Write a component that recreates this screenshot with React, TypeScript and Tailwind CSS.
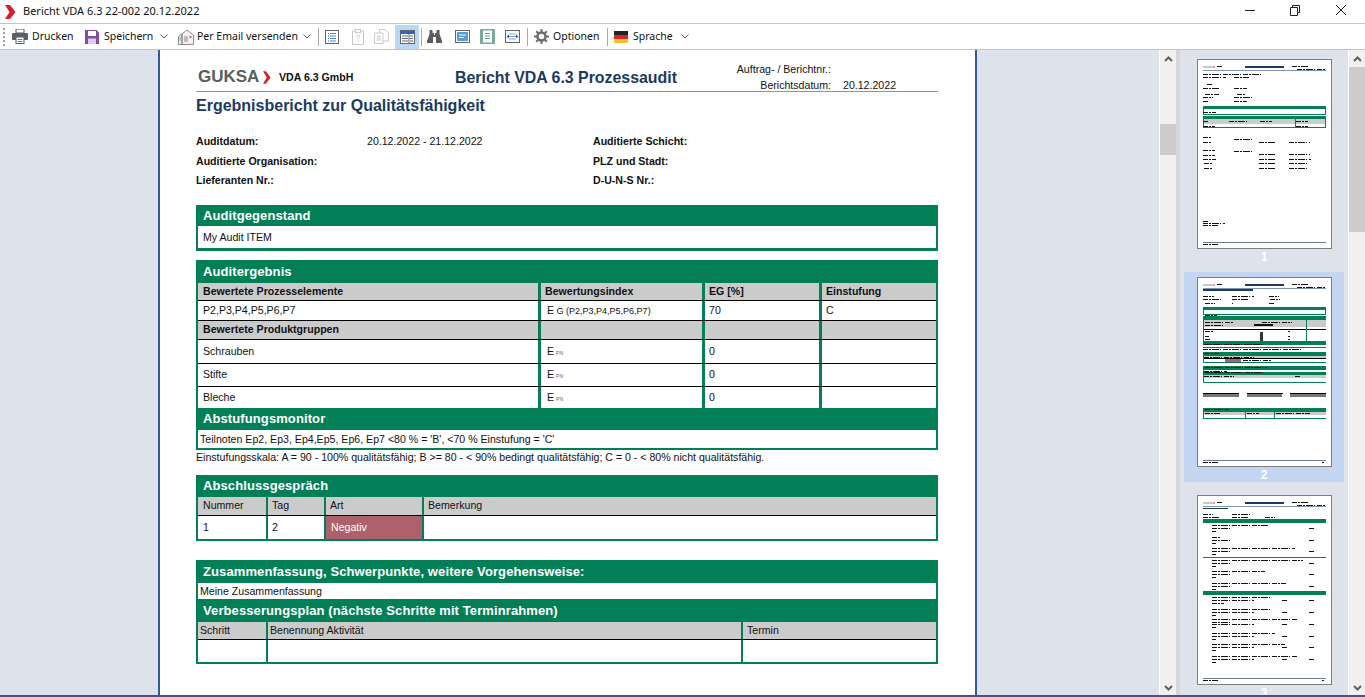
import type { ReactNode } from "react"

const ui = { fontFamily: '"Noto Sans", "Open Sans", sans-serif' }
const doc = { fontFamily: '"Liberation Sans", Arial, sans-serif' }

type Block = [number, number, number, number, string]
type Dash = [number, number, number, string?]

const GREEN = "#037f58"
const GREY = "#cbcbcb"

function Separator() {
  return <div className="h-[18px] w-px bg-[#a9a9a9]" />
}

function Chevron({ className = "" }: { className?: string }) {
  return (
    <svg width="8" height="5" viewBox="0 0 8 5" fill="none" stroke="#555" className={className}>
      <path d="M.5.5 4 4 7.5.5" />
    </svg>
  )
}

function ListIcon() {
  return (
    <svg width="14" height="14" viewBox="0 0 14 14" fill="none">
      <rect x=".5" y=".5" width="13" height="13" fill="#fff" stroke="#5f6670" />
      <path d="M3 3.5h1M3 6h1M3 8.5h1M3 11h1" stroke="#2f6fc4" />
      <path d="M5 3.5h6M5 6h6M5 8.5h6M5 11h6" stroke="#4a86d0" />
    </svg>
  )
}

function Toolbar() {
  return (
    <div className="flex h-[27px] items-center border-y border-[#c4c4c4] bg-white text-[10.5px] text-[#111]" style={ui}>
      <div className="ml-[3px] h-[18px] w-[2px] border-l-2 border-dotted border-[#a0a0a0]" />
      <svg width="16" height="15" viewBox="0 0 16 15" className="ml-[7px]">
        <rect x="4" y="0" width="8" height="4" fill="#fff" stroke="#5b6068" />
        <rect x="0" y="4" width="16" height="7" rx="1" fill="#5b6068" />
        <rect x="4" y="8" width="8" height="6.5" fill="#fff" stroke="#5b6068" />
        <path d="M5.5 10.5h5M5.5 12.5h5" stroke="#7a7f88" />
      </svg>
      <span className="ml-1 w-[40px]">Drucken</span>
      <svg width="14" height="14" viewBox="0 0 14 14" className="ml-[13px]">
        <path d="M0 0h11.500l2.500 2.500V14H0z" fill="#7e4ea3" />
        <rect x="3" y="1" width="8" height="5" fill="#fff" />
        <rect x="3" y="8.500" width="8" height="5.500" fill="#d9cde6" />
      </svg>
      <span className="ml-[5px] w-[48px]">Speichern</span>
      <Chevron className="ml-2" />
      <svg width="16" height="16" viewBox="0 0 16 16" className="ml-[10px]" fill="none">
        <path d="M.5 7.500 4 5v10.500H.5zM4 5l5-4 6.500 5v9.500H4z" fill="#f2f2f2" stroke="#8a8a8a" />
        <path d="M1.500 9h1.500M1.500 11h1.500M6 8h4M6 10h4M6 12h4" stroke="#8a8a8a" />
        <rect x="11.500" y="7" width="2" height="2" fill="#d8685f" />
      </svg>
      <span className="ml-[3px] w-[98px] whitespace-nowrap">Per Email versenden</span>
      <Chevron className="ml-2" />
      <div className="ml-[7px]"><Separator /></div>
      <div className="ml-[6px]"><ListIcon /></div>
      <svg width="14" height="16" viewBox="0 0 14 16" className="ml-[12px]" fill="none" stroke="#c9c9c9">
        <rect x="1.500" y="2" width="11" height="13.500" />
        <rect x="4.500" y=".5" width="5" height="3" fill="#fff" />
        <path d="M5.500 7.500c.3-2 3-2 3 0 0 1-1.500 1-1.500 2.500M7 11.500v1.500" />
      </svg>
      <svg width="15" height="15" viewBox="0 0 15 15" className="ml-[9px]" fill="#fff" stroke="#c9c9c9">
        <path d="M5.500.5H11l3.500 3.500V12h-9z" />
        <path d="M.5 4H9v10.500H.5z" />
        <path d="M2.500 7h4.500M2.500 9h4.500M2.500 11h4.500" />
      </svg>
      <div className="ml-[6px] flex h-[24px] w-[24px] items-center justify-center bg-[#bcd7f5]">
        <svg width="15" height="14" viewBox="0 0 15 14">
          <rect x=".5" y=".5" width="14" height="13" fill="#fff" stroke="#5c6672" />
          <rect x="1" y="1" width="13" height="3" fill="#2f67b5" />
          <path d="M2 6h6M2 8.500h6M2 11h6M10 6h3M10 8.500h3M10 11h3" stroke="#5c6672" />
          <path d="M9 4v9" stroke="#5c6672" />
        </svg>
      </div>
      <div className="ml-[2px]"><Separator /></div>
      <svg width="15" height="13" viewBox="0 0 15 13" className="ml-[5px]" fill="#5c5c5c">
        <path d="M2.500 0h3v3H7v2H8V3h1.500V0h3v4l2.500 7v2H9V7H6v6H0v-2l2.500-7z" />
      </svg>
      <svg width="15" height="13" viewBox="0 0 15 13" className="ml-[13px]">
        <rect x=".5" y=".5" width="14" height="12" fill="#fff" stroke="#5f6670" />
        <rect x="2" y="2" width="11" height="9" fill="#5b9bd5" />
        <path d="M4 5h7M4 7.500h5" stroke="#fff" />
      </svg>
      <svg width="15" height="15" viewBox="0 0 15 15" className="ml-[10px]">
        <rect width="15" height="15" rx="1" fill="#7aa99a" />
        <rect x="3" y="1.500" width="9" height="12" fill="#fff" />
        <path d="M5 4.500h5M5 7h5M5 9.500h5" stroke="#6f8f9f" />
      </svg>
      <svg width="15" height="13" viewBox="0 0 15 13" className="ml-[10px]" fill="none">
        <rect x=".5" y=".5" width="14" height="12" fill="#fff" stroke="#5f6670" />
        <path d="M4 4h7M4 6.500h7M4 9h7" stroke="#7fa8d8" />
        <path d="M1.500 6.500 4 4.500v4zM13.500 6.500 11 4.500v4z" fill="#2f67b5" />
      </svg>
      <div className="ml-[7px]"><Separator /></div>
      <svg width="15" height="15" viewBox="0 0 15 15" className="ml-[6px]" fill="none">
        <circle cx="7.500" cy="7.500" r="4" stroke="#6c6c6c" strokeWidth="2.500" />
        <path d="M7.500 0v3M7.500 12v3M0 7.500h3M12 7.500h3M2.200 2.200l2 2M10.800 10.800l2 2M2.200 12.800l2-2M10.800 4.200l2-2" stroke="#6c6c6c" strokeWidth="2" />
      </svg>
      <span className="ml-1 w-[45px]">Optionen</span>
      <div className="ml-[9px]"><Separator /></div>
      <div className="ml-[6px] h-[12px] w-[14px] bg-[linear-gradient(#222_0,#222_33%,#d8242a_33%,#d8242a_66%,#f2c230_66%)]" />
      <span className="ml-[5px] w-[40px]">Sprache</span>
      <Chevron className="ml-2" />
    </div>
  )
}

function TitleBar() {
  return (
    <div className="flex h-[23px] items-center bg-white text-[11px] text-[#111]" style={ui}>
      <svg width="11" height="14" viewBox="0 0 11 14" className="ml-[5px]">
        <path d="M0 0h5l5.500 7L5 14H0l4.500-7z" fill="#d81e2c" />
      </svg>
      <span className="ml-[7px]">Bericht VDA 6.3 22-002 20.12.2022</span>
      <svg width="102" height="14" viewBox="0 0 102 14" fill="none" stroke="#222" className="ml-auto mr-[18px] -mt-[3px]">
        <path d="M0 7.500h10" />
        <path d="M45.500 4.500h7v8h-7zM47.500 4.500v-2h7v7h-2" />
        <path d="M91 2l10 10M101 2 91 12" />
      </svg>
    </div>
  )
}

function Section({ children, className = "" }: { children: ReactNode; className?: string }) {
  return <div className={`border-x-2 border-[#037f58] ${className}`}>{children}</div>
}

function Band({ children, h = "h-[22px]" }: { children: ReactNode; h?: string }) {
  return (
    <div className={`${h} -mx-[2px] flex items-center bg-[#037f58] pl-[7px] text-[13px] font-bold tracking-[0.1px] text-white`}>
      {children}
    </div>
  )
}

function Cells({ widths, cells, grey, bold, h, line, thin, bodyClass = "" }: {
  widths: string
  cells: ReactNode[]
  grey?: boolean
  bold?: boolean
  h: string
  line?: boolean
  thin?: boolean
  bodyClass?: string
}) {
  return (
    <div className={`grid ${h} ${widths} ${line ? "border-b border-black" : ""} ${grey ? "bg-[#cbcbcb]" : "bg-white"}`}>
      {cells.map((c, i) => (
        <div
          key={i}
          className={`flex items-center border-[#037f58] text-[10.6px] text-[#111] ${i > 0 ? (thin ? "border-l-2 pl-[4px]" : "border-l-[3px] pl-[4px]") : "pl-[5px]"} ${bold ? "font-bold" : ""} ${bodyClass}`}
        >
          {c}
        </div>
      ))}
    </div>
  )
}

function Eindex({ text }: { text: string }) {
  return (
    <span className="ml-[2px] flex items-baseline">
      <span className="text-[10.6px]">E</span>
      <span className="ml-[2px] text-[5px] text-[#666]">{text}</span>
    </span>
  )
}

const resultCols = "grid-cols-[340px_164px_117px_1fr]"
const closingCols = "grid-cols-[68px_58px_98px_1fr]"
const planCols = "grid-cols-[68px_475px_1fr]"

function Report() {
  return (
    <div className="ml-[158px] h-full w-[819px] shrink-0 overflow-hidden border-x-2 border-[#2f5a9e] bg-white pl-[36px]" style={doc}>
      <div className="w-[742px]">
        <div className="flex h-[42px] border-b border-[#7f96b5]">
          <div className="ml-[2px] mt-[17px] flex h-[20px] w-[73px] items-center text-[17px] font-bold text-[#56605e]">
            GUKSA
            <svg width="8" height="13" viewBox="0 0 8 13" className="ml-[4px]">
              <path d="M0 0h3l5 6.500L3 13H0l4-6.500z" fill="#d81e2c" />
            </svg>
          </div>
          <div className="ml-[8px] mt-[21px] w-[176px] text-[10.6px] font-bold leading-[13px] text-[#111]">VDA 6.3 GmbH</div>
          <div className="mt-[18px] w-[282px] text-[15.9px] font-bold leading-[20px] text-[#1b3a63]">Bericht VDA 6.3 Prozessaudit</div>
          <div className="mt-[12px] grid grid-cols-[94px_auto] grid-rows-[16px_16px] items-center gap-x-[12px] text-[10.6px] text-[#111]">
            <div className="-ml-[10px] whitespace-nowrap text-right">Auftrag- / Berichtnr.:</div>
            <div />
            <div className="text-right">Berichtsdatum:</div>
            <div>20.12.2022</div>
          </div>
        </div>
        <div className="mt-[4px] text-[16px] font-bold leading-[20px] text-[#1b3a63]">Ergebnisbericht zur Qualitätsfähigkeit</div>
        <div className="mt-[16px] grid grid-cols-[171px_226px_1fr] grid-rows-[20px_19px_20px] items-center text-[10.6px] text-[#111]">
          <b>Auditdatum:</b>
          <span>20.12.2022 - 21.12.2022</span>
          <b>Auditierte Schicht:</b>
          <b className="whitespace-nowrap">Auditierte Organisation:</b>
          <span />
          <b>PLZ und Stadt:</b>
          <b>Lieferanten Nr.:</b>
          <span />
          <b>D-U-N-S Nr.:</b>
        </div>

        <Section className="mt-[14px] border-b-[3px]">
          <Band h="h-[21px]">Auditgegenstand</Band>
          <div className="flex h-[22px] items-center pl-[5px] pt-[2px] text-[10.6px] text-[#111]">My Audit ITEM</div>
        </Section>

        <Section className="mt-[9px]">
          <Band h="h-[23px]">Auditergebnis</Band>
          <Cells h="h-[18px]" line grey bold widths={resultCols} cells={["Bewertete Prozesselemente", "Bewertungsindex", "EG [%]", "Einstufung"]} />
          <Cells h="h-[20px]" line widths={resultCols} cells={[
            "P2,P3,P4,P5,P6,P7",
            <span className="ml-[2px] text-[9px]"><span className="text-[10.6px]">E</span> G (P2,P3,P4,P5,P6,P7)</span>,
            "70",
            "C",
          ]} />
          <Cells h="h-[19px]" line grey bold widths={resultCols} cells={["Bewertete Produktgruppen", "", "", ""]} />
          <Cells h="h-[24px]" line widths={resultCols} cells={["Schrauben", <Eindex text="PN" />, "0", ""]} />
          <Cells h="h-[23px]" line widths={resultCols} cells={["Stifte", <Eindex text="PN" />, "0", ""]} />
          <Cells h="h-[21px]" widths={resultCols} cells={["Bleche", <Eindex text="PN" />, "0", ""]} />
          <Band>Abstufungsmonitor</Band>
          <div className="flex h-[18px] items-center pl-[2px] pt-[1px] text-[10.6px] text-[#111]">Teilnoten Ep2, Ep3, Ep4,Ep5, Ep6, Ep7 &lt;80 % = 'B', &lt;70 % Einstufung = 'C'</div>
          <div className="-mx-[2px] h-[2px] bg-[#037f58]" />
        </Section>
        <div className="flex h-[16px] items-center text-[10.6px] text-[#111]">
          Einstufungsskala: A = 90 - 100% qualitätsfähig; B &gt;= 80 - &lt; 90% bedingt qualitätsfähig; C = 0 - &lt; 80% nicht qualitätsfähig.
        </div>

        <Section className="mt-[9px] border-b-2">
          <Band>Abschlussgespräch</Band>
          <Cells h="h-[19px]" line grey thin widths={closingCols} cells={["Nummer", "Tag", "Art", "Bemerkung"]} />
          <div className={`grid h-[23px] ${closingCols}`}>
            <div className="flex items-center pl-[5px] text-[10.6px] text-[#111]">1</div>
            <div className="flex items-center border-l-2 border-[#037f58] pl-[4px] text-[10.6px] text-[#111]">2</div>
            <div className="flex items-center border-l-2 border-[#037f58] bg-[#ae616a] pl-[5px] text-[10.6px] text-white">Negativ</div>
            <div className="border-l-2 border-[#037f58]" />
          </div>
        </Section>

        <Section className="mt-[19px] border-b-2">
          <Band h="h-[23px]">Zusammenfassung, Schwerpunkte, weitere Vorgehensweise:</Band>
          <div className="flex h-[16px] items-center pl-[2px] pt-[1px] text-[10.6px] text-[#111]">Meine Zusammenfassung</div>
          <Band h="h-[23px]">Verbesserungsplan (nächste Schritte mit Terminrahmen)</Band>
          <Cells h="h-[18px]" line grey thin widths={planCols} bodyClass="!pl-[2px]" cells={["Schritt", "Benennung Aktivität", <span className="ml-[2px]">Termin</span>]} />
          <Cells h="h-[22px]" thin widths={planCols} cells={["", "", ""]} />
        </Section>
      </div>
    </div>
  )
}

function Scrollbar({ thumbTop, thumbH }: { thumbTop: string; thumbH: string }) {
  return (
    <div className="relative h-full w-[16px] shrink-0 bg-[#f0f0f0]">
      <svg width="9" height="6" viewBox="0 0 9 6" className="absolute left-[4px] top-[6px]" fill="none" stroke="#606060" strokeWidth="2">
        <path d="M1 5l3.500-3.500L8 5" />
      </svg>
      <div className={`absolute left-0 w-full bg-[#cdcdcd] ${thumbTop} ${thumbH}`} />
      <svg width="9" height="6" viewBox="0 0 9 6" className="absolute bottom-[4px] left-[4px]" fill="none" stroke="#606060" strokeWidth="2">
        <path d="M1 1l3.500 3.500L8 1" />
      </svg>
    </div>
  )
}

const header: Block[] = [
  [6, 7, 11, 2, "#c4c8c8"],
  [17, 7, 1, 2, "#e88a90"],
  [48, 7, 39, 2, "#1b3a63"],
  [6, 11, 123, 1, "#8496ad"],
]

const page1: Block[] = [
  ...header,
  [6, 47, 123, 3, GREEN], [6, 50, 1, 6, GREEN], [128, 50, 1, 6, GREEN], [6, 55, 123, 1, GREEN],
  [6, 57, 123, 3, GREEN], [7, 60, 121, 5, GREY], [6, 60, 1, 9, GREEN], [128, 60, 1, 9, GREEN], [98, 60, 1, 9, GREEN], [6, 68, 123, 1, GREEN],
  [6, 184, 123, 1, "#6f7b8a"],
]

const page1Text: Dash[] = [
  [20, 7, 6], [95, 7, 17], [100, 10, 29], [6, 15, 60], [6, 18, 23], [37, 18, 15],
  [10, 25, 6], [6, 29, 16], [37, 29, 13], [8, 35, 14], [40, 35, 8], [6, 38, 10], [37, 38, 18], [6, 42, 6], [37, 42, 13],
  [6, 53, 13], [6, 62, 6], [32, 62, 20], [63, 62, 12], [99, 62, 12], [6, 67, 12], [99, 67, 12],
  [6, 78, 8], [6, 83, 8], [37, 80, 20], [62, 83, 17], [92, 83, 21],
  [6, 91, 12], [37, 92, 20], [62, 96, 17], [92, 96, 21], [6, 97, 12], [6, 101, 13], [62, 101, 17], [92, 101, 22], [7, 105, 9], [62, 105, 17], [92, 105, 20], [7, 110, 9], [62, 110, 17], [92, 110, 20],
  [6, 163, 6], [6, 165, 22], [6, 167, 15], [6, 186, 15],
]

const page2: Block[] = [
  ...header,
  [6, 30, 123, 3, GREEN], [6, 33, 1, 5, GREEN], [128, 33, 1, 5, GREEN], [6, 37, 123, 1, GREEN],
  [6, 39, 123, 4, GREEN], [7, 43, 122, 7, GREY], [6, 52, 123, 1, "#000"], [6, 43, 1, 21, GREEN], [109, 43, 1, 21, GREEN],
  [6, 64, 123, 4, GREEN], [6, 70, 123, 1, GREEN],
  [6, 75, 123, 4, GREEN], [7, 79, 122, 2, GREY], [6, 81, 123, 1, "#000"], [28, 82, 16, 3, "#ae616a"], [6, 79, 1, 7, GREEN], [6, 85, 123, 1, GREEN],
  [6, 89, 123, 4, GREEN], [6, 95, 123, 4, GREEN], [7, 99, 122, 3, GREY], [6, 89, 1, 18, GREEN], [6, 106, 123, 1, GREEN],
  [6, 117, 36, 1, "#000"], [6, 118, 36, 3, "#777"], [50, 117, 36, 1, "#000"], [50, 118, 35, 3, "#777"], [93, 117, 36, 1, "#000"], [93, 118, 36, 3, "#777"],
  [6, 132, 123, 4, GREEN], [7, 136, 122, 3, GREY], [6, 136, 1, 7, GREEN], [48, 136, 1, 7, GREEN], [77, 136, 1, 7, GREEN], [6, 142, 123, 1, GREEN],
  [6, 184, 123, 1, "#6f7b8a"],
  [6, 12, 50, 2, "#1b3a63"], [57, 47, 19, 2, "#111"], [63, 55, 3, 9, "#333"],
]

const page2Text: Dash[] = [
  [20, 7, 6], [95, 7, 17], [100, 10, 29],
  [6, 19, 11], [35, 19, 22], [72, 19, 10], [6, 22, 20], [35, 22, 17], [73, 22, 10], [8, 26, 10], [35, 26, 1], [72, 26, 5],
  [8, 38, 12], [8, 45, 28], [65, 45, 30], [8, 48, 18], [8, 54, 8], [91, 54, 2], [8, 59, 4], [91, 59, 2], [8, 62, 5], [91, 62, 2],
  [7, 67, 60], [6, 72, 100], [8, 76, 14], [7, 80, 50], [46, 83, 28], [8, 90, 62], [7, 94, 23], [8, 96, 60], [7, 100, 30], [98, 100, 5],
  [8, 133, 24], [8, 137, 15], [50, 137, 12], [79, 137, 34], [6, 186, 15], [125, 186, 2],
]

const page3: Block[] = [
  ...header,
  [6, 24, 123, 4, GREEN], [6, 62, 123, 1, "#2f6f58"], [6, 97, 123, 4, GREEN],
  [6, 184, 123, 1, "#6f7b8a"],
  [6, 13, 25, 1, "#1b3a63"],
]

const page3Text: Dash[] = [
  [20, 7, 6], [95, 7, 17], [100, 10, 29], [6, 19, 10], [35, 19, 20], [6, 22, 16], [35, 22, 17], [68, 22, 10],
  [15, 30, 56], [15, 33, 20], [112, 33, 5], [15, 36, 4], [15, 42, 9], [15, 45, 20], [112, 45, 5], [15, 48, 4],
  [15, 53, 83], [15, 56, 20], [112, 56, 5], [15, 59, 4], [15, 65, 91], [15, 68, 20], [112, 68, 5], [15, 71, 4],
  [15, 76, 53], [15, 79, 20], [112, 79, 5], [15, 82, 4], [15, 88, 74], [15, 91, 20], [112, 91, 5], [15, 94, 4],
  [15, 103, 58], [15, 106, 42], [85, 106, 5], [112, 106, 5], [15, 109, 12], [15, 115, 58], [15, 118, 42], [85, 118, 5], [112, 118, 5], [15, 121, 4],
  [15, 125, 85], [15, 128, 20], [15, 130, 42], [85, 130, 5], [112, 130, 5], [15, 133, 4], [15, 139, 63], [15, 142, 42], [85, 142, 5], [112, 142, 5], [15, 145, 4],
  [15, 150, 73], [15, 153, 42], [85, 153, 5], [112, 153, 5], [15, 156, 4], [15, 162, 86], [15, 165, 42], [85, 165, 5], [112, 165, 5], [15, 168, 4],
  [6, 186, 15], [125, 186, 2],
]

function Thumbnail({ blocks, text }: { blocks: Block[]; text: Dash[] }) {
  return (
    <svg width="135" height="191" viewBox="0 0 135 191" className="block" shapeRendering="crispEdges">
      <rect x=".5" y=".5" width="134" height="190" fill="#fff" stroke="#7d7d7d" />
      {blocks.map(([x, y, w, h, fill], i) => (
        <rect key={i} x={x} y={y} width={w} height={h} fill={fill} />
      ))}
      {text.map(([x, y, w, color], i) => (
        <path key={i} d={`M${x} ${y + 0.5}h${w}`} stroke={color ?? "#111"} strokeDasharray="5 1 2 1 7 1 1 2" />
      ))}
    </svg>
  )
}

function ThumbPage({ n, selected, blocks, text }: { n: number; selected?: boolean; blocks: Block[]; text: Dash[] }) {
  return (
    <div className={`flex h-[210px] w-[160px] flex-col items-center pt-[5px] ${selected ? "bg-[#c3d5f0]" : ""}`}>
      <Thumbnail blocks={blocks} text={text} />
      <span className="mt-[1px] text-[12px] font-bold leading-[14px] text-white" style={doc}>{n}</span>
    </div>
  )
}

function Thumbnails() {
  return (
    <div className="flex h-full w-[168px] shrink-0 flex-col items-center gap-[8px] overflow-hidden bg-[#dde2eb] pt-[4px]">
      <ThumbPage n={1} blocks={page1} text={page1Text} />
      <ThumbPage n={2} selected blocks={page2} text={page2Text} />
      <ThumbPage n={3} blocks={page3} text={page3Text} />
    </div>
  )
}

export default function App() {
  return (
    <div className="flex h-[697px] w-[1365px] flex-col overflow-hidden bg-white">
      <TitleBar />
      <Toolbar />
      <div className="flex min-h-0 flex-1 border-b-2 border-[#2f5a9e] bg-[#dde2eb]">
        <div className="min-w-0 flex-1"><Report /></div>
        <div className="w-px bg-white" />
        <Scrollbar thumbTop="top-[74px]" thumbH="h-[31px]" />
        <div className="w-[4px] bg-[#d6d6d6]" />
        <Thumbnails />
        <div className="w-px bg-white" />
        <Scrollbar thumbTop="top-[17px]" thumbH="h-[165px]" />
      </div>
    </div>
  )
}
